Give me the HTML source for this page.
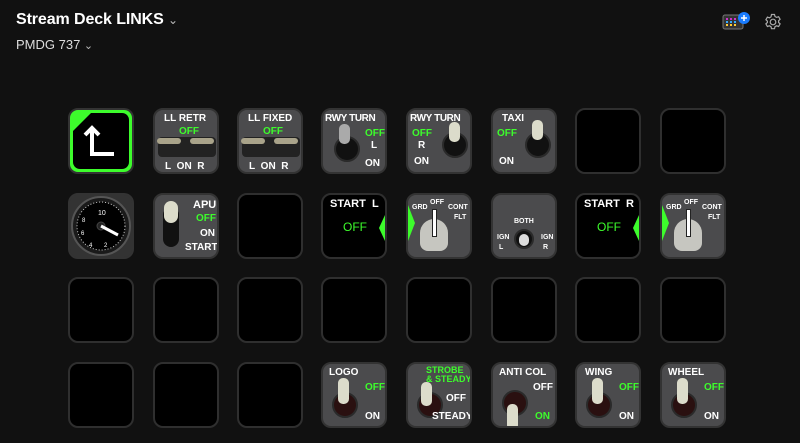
<!DOCTYPE html>
<html><head><meta charset="utf-8"><style>
body{margin:0;width:800px;height:443px;background:#111;overflow:hidden;font-family:"Liberation Sans",sans-serif;position:relative;color:#fff}
.t{position:absolute;left:16px;top:11px;font-size:16px;font-weight:bold;letter-spacing:-.1px}
.s{position:absolute;left:16px;top:37px;font-size:13px;color:#ddd}
.k{position:absolute;width:66px;height:66px;border-radius:10px;box-sizing:border-box;overflow:hidden}
.e{background:#000;border:2px solid #2f2f2f}
.p{background:#4b4b4d;border:2px solid #333}
.l{position:absolute;font-size:10px;font-weight:bold;color:#fff;white-space:nowrap;line-height:10px}
.g{color:#3dfc2c}
.tog{position:absolute;width:22px;height:22px;border-radius:50%;background:#111;border:2px solid #2a2a2a}
.lev{position:absolute;width:11px;height:20px;border-radius:5px;background:#dcdccb}
</style></head><body>
<div class="t">Stream Deck LINKS <span style="font-weight:normal;font-size:12px;color:#bbb">&#8964;</span></div>
<div class="s">PMDG 737 <span style="font-size:11px;color:#bbb">&#8964;</span></div>
<svg style="position:absolute;left:722px;top:12px" width="30" height="20"><rect x="1" y="3" width="20" height="14" rx="2" fill="#333" stroke="#777"/><g fill="#c3c"><rect x="4" y="6" width="2" height="2"/><rect x="8" y="6" width="2" height="2"/><rect x="12" y="6" width="2" height="2"/></g><g fill="#3af"><rect x="4" y="9" width="2" height="2"/><rect x="8" y="9" width="2" height="2"/><rect x="12" y="9" width="2" height="2"/></g><g fill="#fc3"><rect x="4" y="12" width="2" height="2"/><rect x="8" y="12" width="2" height="2"/><rect x="12" y="12" width="2" height="2"/></g><circle cx="22" cy="6" r="6" fill="#1a7cff"/><path d="M22 3v6M19 6h6" stroke="#fff" stroke-width="1.5"/></svg>
<svg style="position:absolute;left:764px;top:13px" width="18" height="18" viewBox="0 0 18 18"><circle cx="9" cy="9" r="2.8" fill="none" stroke="#aaa" stroke-width="1.2"/><path d="M7.5 1.5h3l.5 2 1.6.9 2-.7 1.5 2.6-1.5 1.4v1.8l1.5 1.4-1.5 2.6-2-.7-1.6.9-.5 2h-3l-.5-2-1.6-.9-2 .7-1.5-2.6 1.5-1.4V8.1L1.9 6.7l1.5-2.6 2 .7L7 3.9z" fill="none" stroke="#aaa" stroke-width="1.2"/></svg>

<!-- row1 -->
<div class="k" style="left:68px;top:108px;background:#3dfc2c;border:2px solid #333;padding:0">
<div style="position:absolute;left:3px;top:3px;width:56px;height:56px;background:#000;border-radius:7px;clip-path:polygon(18px 0,100% 0,100% 100%,0 100%,0 18px)"></div>
<svg style="position:absolute;left:12px;top:12px" width="40" height="40"><path d="M10 34V6M3 13l7-7 7 7M10 32h22" stroke="#fff" stroke-width="4" fill="none"/></svg></div>
<div class="k p" style="left:153px;top:108px"><div class="l" style="left:9px;top:4px">LL RETR</div><div class="l g" style="left:24px;top:17px">OFF</div><div style="position:absolute;left:3px;top:27px;width:58px;height:20px;background:#222;border-radius:4px"></div><div style="position:absolute;left:2px;top:28px;width:24px;height:6px;background:#a9a38a;border-radius:3px"></div><div style="position:absolute;left:35px;top:28px;width:24px;height:6px;background:#a9a38a;border-radius:3px"></div><div class="l" style="left:10px;top:52px">L&nbsp;&nbsp;ON&nbsp;&nbsp;R</div></div>
<div class="k p" style="left:237px;top:108px"><div class="l" style="left:9px;top:4px">LL FIXED</div><div class="l g" style="left:24px;top:17px">OFF</div><div style="position:absolute;left:3px;top:27px;width:58px;height:20px;background:#222;border-radius:4px"></div><div style="position:absolute;left:2px;top:28px;width:24px;height:6px;background:#a9a38a;border-radius:3px"></div><div style="position:absolute;left:35px;top:28px;width:24px;height:6px;background:#a9a38a;border-radius:3px"></div><div class="l" style="left:10px;top:52px">L&nbsp;&nbsp;ON&nbsp;&nbsp;R</div></div>
<div class="k p" style="left:321px;top:108px"><div class="l" style="left:2px;top:4px;letter-spacing:-.4px">RWY TURN</div><div class="tog" style="left:11px;top:26px"></div><div class="lev" style="left:16px;top:14px;background:#aaa"></div><div class="l g" style="left:42px;top:19px">OFF</div><div class="l" style="left:48px;top:31px">L</div><div class="l" style="left:42px;top:49px">ON</div></div>
<div class="k p" style="left:406px;top:108px"><div class="l" style="left:2px;top:4px;letter-spacing:-.4px">RWY TURN</div><div class="tog" style="left:34px;top:22px"></div><div class="lev" style="left:41px;top:12px"></div><div class="l g" style="left:4px;top:19px">OFF</div><div class="l" style="left:10px;top:31px">R</div><div class="l" style="left:6px;top:47px">ON</div></div>
<div class="k p" style="left:491px;top:108px"><div class="l" style="left:9px;top:4px">TAXI</div><div class="tog" style="left:32px;top:22px"></div><div class="lev" style="left:39px;top:10px"></div><div class="l g" style="left:4px;top:19px">OFF</div><div class="l" style="left:6px;top:47px">ON</div></div>
<div class="k e" style="left:575px;top:108px"></div>
<div class="k e" style="left:660px;top:108px"></div>

<!-- row2 -->
<div class="k p" style="left:68px;top:193px;background:#333"><svg width="62" height="62"><circle cx="31" cy="31" r="29" fill="#1a1a1a" stroke="#555" stroke-width="2"/><circle cx="31" cy="31" r="24" fill="#000" stroke="#ccc" stroke-width="1" stroke-dasharray="1 2"/><text x="28" y="20" font-size="7" fill="#fff" font-family="Liberation Sans">10</text><text x="12" y="27" font-size="6" fill="#fff">8</text><text x="11" y="40" font-size="6" fill="#fff">6</text><text x="19" y="52" font-size="6" fill="#fff">4</text><text x="34" y="52" font-size="6" fill="#fff">2</text><circle cx="31" cy="31" r="4" fill="#222" stroke="#444"/><path d="M31 31L48 40" stroke="#fff" stroke-width="3"/></svg></div>
<div class="k p" style="left:153px;top:193px"><div style="position:absolute;left:8px;top:12px;width:16px;height:40px;background:#111;border-radius:8px"></div><div class="lev" style="left:9px;top:6px;width:14px;height:22px;border-radius:7px"></div><div class="l" style="left:38px;top:5px;font-size:11px">APU</div><div class="l g" style="left:41px;top:19px">OFF</div><div class="l" style="left:45px;top:34px">ON</div><div class="l" style="left:30px;top:48px">START</div></div>
<div class="k e" style="left:237px;top:193px"></div>
<div class="k e" style="left:321px;top:193px"><div class="l" style="left:7px;top:4px;font-size:11px">START&nbsp;&nbsp;L</div><div class="l g" style="left:20px;top:27px;font-size:12px;font-weight:normal">OFF</div><div style="position:absolute;right:0;top:20px;width:6px;height:26px;background:#3dfc2c;clip-path:polygon(100% 0,100% 100%,0 50%)"></div></div>
<div class="k p" style="left:406px;top:193px"><div style="position:absolute;left:0;top:10px;width:7px;height:36px;background:#3dfc2c;clip-path:polygon(0 0,100% 50%,0 100%)"></div><div class="l" style="left:4px;top:8px;font-size:7px">GRD</div><div class="l" style="left:22px;top:3px;font-size:7px">OFF</div><div class="l" style="left:40px;top:8px;font-size:7px">CONT</div><div class="l" style="left:46px;top:18px;font-size:7px">FLT</div><div style="position:absolute;left:12px;top:24px;width:28px;height:32px;background:#c6c6c0;border-radius:14px 14px 8px 8px"></div><div style="position:absolute;left:24px;top:14px;width:3px;height:26px;background:#fff;border:1px solid #222"></div></div>
<div class="k p" style="left:491px;top:193px"><div class="l" style="left:21px;top:22px;font-size:7px">BOTH</div><div class="l" style="left:4px;top:38px;font-size:7px">IGN<br>&nbsp;L</div><div class="l" style="left:48px;top:38px;font-size:7px">IGN<br>&nbsp;R</div><div class="tog" style="left:21px;top:34px;width:16px;height:16px"></div><div style="position:absolute;left:26px;top:39px;width:10px;height:12px;border-radius:5px;background:#ddd"></div></div>
<div class="k e" style="left:575px;top:193px"><div class="l" style="left:7px;top:4px;font-size:11px">START&nbsp;&nbsp;R</div><div class="l g" style="left:20px;top:27px;font-size:12px;font-weight:normal">OFF</div><div style="position:absolute;right:0;top:20px;width:6px;height:26px;background:#3dfc2c;clip-path:polygon(100% 0,100% 100%,0 50%)"></div></div>
<div class="k p" style="left:660px;top:193px"><div style="position:absolute;left:0;top:10px;width:7px;height:36px;background:#3dfc2c;clip-path:polygon(0 0,100% 50%,0 100%)"></div><div class="l" style="left:4px;top:8px;font-size:7px">GRD</div><div class="l" style="left:22px;top:3px;font-size:7px">OFF</div><div class="l" style="left:40px;top:8px;font-size:7px">CONT</div><div class="l" style="left:46px;top:18px;font-size:7px">FLT</div><div style="position:absolute;left:12px;top:24px;width:28px;height:32px;background:#c6c6c0;border-radius:14px 14px 8px 8px"></div><div style="position:absolute;left:24px;top:14px;width:3px;height:26px;background:#fff;border:1px solid #222"></div></div>

<!-- row3 -->
<div class="k e" style="left:68px;top:277px"></div><div class="k e" style="left:153px;top:277px"></div><div class="k e" style="left:237px;top:277px"></div><div class="k e" style="left:321px;top:277px"></div><div class="k e" style="left:406px;top:277px"></div><div class="k e" style="left:491px;top:277px"></div><div class="k e" style="left:575px;top:277px"></div><div class="k e" style="left:660px;top:277px"></div>

<!-- row4 -->
<div class="k e" style="left:68px;top:362px"></div><div class="k e" style="left:153px;top:362px"></div><div class="k e" style="left:237px;top:362px"></div>
<div class="k p" style="left:321px;top:362px"><div class="l" style="left:6px;top:4px">LOGO</div><div class="tog" style="left:9px;top:28px;background:#2a1010"></div><div class="lev" style="left:15px;top:14px;height:26px"></div><div class="l g" style="left:42px;top:19px">OFF</div><div class="l" style="left:42px;top:48px">ON</div></div>
<div class="k p" style="left:406px;top:362px"><div class="l g" style="left:18px;top:2px;font-size:9px;line-height:9px">STROBE<br>&amp; STEADY</div><div class="tog" style="left:9px;top:28px;background:#2a1010"></div><div class="lev" style="left:13px;top:18px;height:24px"></div><div class="l" style="left:38px;top:30px">OFF</div><div class="l" style="left:24px;top:48px">STEADY</div></div>
<div class="k p" style="left:491px;top:362px"><div class="l" style="left:6px;top:4px">ANTI COL</div><div class="tog" style="left:9px;top:26px;background:#2a1010"></div><div class="lev" style="left:14px;top:40px;height:26px"></div><div class="l" style="left:40px;top:19px">OFF</div><div class="l g" style="left:42px;top:48px">ON</div></div>
<div class="k p" style="left:575px;top:362px"><div class="l" style="left:8px;top:4px">WING</div><div class="tog" style="left:9px;top:28px;background:#2a1010"></div><div class="lev" style="left:15px;top:14px;height:26px"></div><div class="l g" style="left:42px;top:19px">OFF</div><div class="l" style="left:42px;top:48px">ON</div></div>
<div class="k p" style="left:660px;top:362px"><div class="l" style="left:6px;top:4px">WHEEL</div><div class="tog" style="left:9px;top:28px;background:#2a1010"></div><div class="lev" style="left:15px;top:14px;height:26px"></div><div class="l g" style="left:42px;top:19px">OFF</div><div class="l" style="left:42px;top:48px">ON</div></div>
</body></html>
